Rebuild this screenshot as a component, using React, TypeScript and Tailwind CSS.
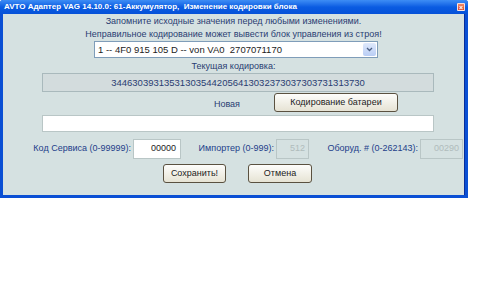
export default function App() {
  const label = 'text-[#23408a] whitespace-nowrap shrink-0 flex justify-end';
  const btn =
    'h-[19px] bg-gradient-to-b from-[#fdfdfb] to-[#e6e3d4] border border-[#5a5140] rounded-[3px] flex items-center justify-center text-[#1c1c1c] shrink-0';
  return (
    <div className="w-[480px] h-[297px] bg-white" style={{ fontFamily: '"Liberation Sans", Arial, sans-serif' }}>
      <div className="w-[468px] h-[198px] flex flex-col bg-[#0a4fd4] rounded-t-[3px]">
        {/* title bar */}
        <div className="h-[14px] shrink-0 flex items-center justify-between pl-[4px] pr-[3px] bg-gradient-to-b from-[#3d8df5] via-[#0a5ce2] to-[#0651d8] rounded-t-[3px]">
          <span className="text-[8px] font-bold text-white leading-none whitespace-nowrap">
            AVTO Адаптер VAG 14.10.0: 61-Аккумулятор,&nbsp; Изменение кодировки блока
          </span>
          <div className="w-[8px] h-[8px] rounded-[1px] bg-gradient-to-b from-[#f08a6a] to-[#d8452a] border border-white/80 flex items-center justify-center">
            <span className="text-white text-[7px] leading-none font-bold">×</span>
          </div>
        </div>
        {/* body */}
        <div className="flex-1 mx-[3px] mb-[3px] bg-[#d5e1e1] flex flex-col items-center text-[9px] leading-none text-[#2a3d72] border-r border-[#0a2e99]">
          <div className="mt-[1px] h-[13px] flex items-center whitespace-nowrap">Запомните исходные значения перед любыми изменениями.</div>
          <div className="h-[13px] flex items-center whitespace-nowrap">Неправильное кодирование может вывести блок управления из строя!</div>
          <div className="self-start ml-[91px] w-[284px] h-[17px] bg-white border border-[#7f9db9] flex items-center justify-between pl-[3px] pr-[1px] text-[#1c1c1c] text-[9.5px]">
            <span className="whitespace-nowrap">1 -- 4F0 915 105 D -- von VA0&nbsp; 2707071170</span>
            <div className="w-[13px] h-[13px] bg-gradient-to-b from-[#dfe9fb] to-[#b9cdf5] rounded-[2px] flex items-center justify-center">
              <svg width="7" height="5" viewBox="0 0 7 5"><path d="M1 1 L3.5 3.5 L6 1" stroke="#4d6185" strokeWidth="1.3" fill="none" /></svg>
            </div>
          </div>
          <div className="mt-[2px] h-[12px] flex items-center">Текущая кодировка:</div>
          <div className="self-start ml-[39px] mt-[1px] w-[392px] h-[19px] bg-[#d3dcdd] border border-[#a9b9bc] flex items-center justify-center text-[9.5px]">
            344630393135313035442056413032373037303731313730
          </div>
          <div className="self-start ml-[39px] w-[392px] h-[21px] flex items-center">
            <span className="w-[198px] shrink-0 text-right mt-[3px]">Новая</span>
            <div className={`ml-[34px] w-[124px] ${btn}`}>Кодирование батареи</div>
          </div>
          <div className="self-start ml-[39px] mt-[2px] w-[392px] h-[17px] bg-white border border-[#b9c6c6]" />
          <div className="self-start mt-[6px] flex items-center h-[21px]">
            <span className={`ml-[29px] w-[99px] ${label}`}>Код Сервиса (0-99999):</span>
            <div className="ml-[2px] w-[48px] h-[20px] bg-white border border-[#b9c6c6] flex items-center justify-end pr-[4px] text-[#1c1c1c] shrink-0">00000</div>
            <span className={`ml-[12px] w-[81px] ${label}`}>Импортер (0-999):</span>
            <div className="ml-[2px] w-[33px] h-[20px] border border-[#b9c6c6] flex items-center justify-end pr-[3px] text-[#b0bcbc] shrink-0">512</div>
            <span className={`ml-[18px] w-[91px] ${label}`}>Оборуд. # (0-262143):</span>
            <div className="ml-[2px] w-[43px] h-[20px] border border-[#b9c6c6] flex items-center justify-end pr-[3px] text-[#b0bcbc] shrink-0">00290</div>
          </div>
          <div className="self-start ml-[160px] mt-[5px] flex gap-[22px]">
            <div className={`w-[63px] ${btn}`}>Сохранить!</div>
            <div className={`w-[64px] ${btn}`}>Отмена</div>
          </div>
        </div>
      </div>
    </div>
  );
}
